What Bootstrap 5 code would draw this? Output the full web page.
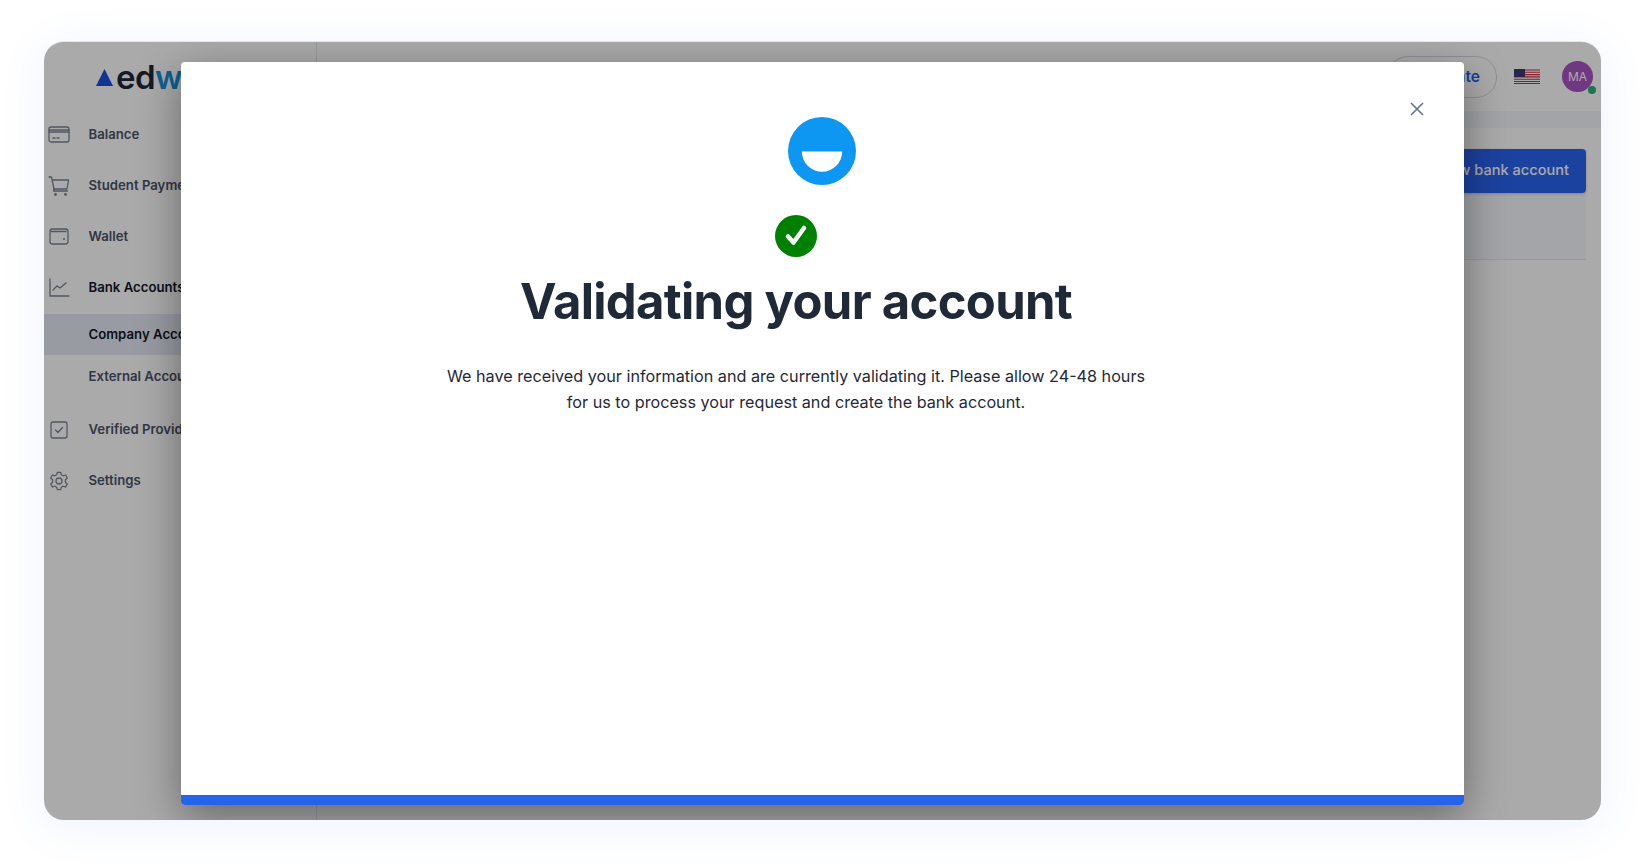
<!DOCTYPE html>
<html lang="en">
<head>
    <meta charset="UTF-8">
    <meta name="viewport" content="width=device-width, initial-scale=1.0">
    <title>Validating your account</title>
    <link href="https://cdn.jsdelivr.net/npm/bootstrap@5.3.0/dist/css/bootstrap.min.css" rel="stylesheet">
    <style>
        html, body { height: 100%; }
        body { background: #fff; font-family: Inter, "Liberation Sans", sans-serif; overflow: hidden; }
        .page-wrap { height: 867px; padding: 41px 44px 47px; }
        .app-window { height: 779px; border-radius: 20px; background: #fff; overflow: hidden; box-shadow: 0 6px 44px rgba(70, 130, 255, .1); border-top: 1px solid #dfe7f4; }
        .side-col { width: 273px; flex: none; border-right: 1px solid #e5e7eb; }
        .logo-row { height: 67px; padding: 3px 0 0 52px; gap: 3px; }
        .logo-word { font-size: 33px; font-weight: 600; line-height: 40px; color: #1f2937; letter-spacing: -.5px; }
        .logo-word span { color: #1391dc; }
        .side-item { height: 51px; color: #4a5568; font-size: 13.200px; font-weight: 600; padding-left: 3px; gap: 17.500px; white-space: nowrap; }
        .side-item svg { width: 24px; height: 24px; flex: none; fill: none; stroke: #7b8494; stroke-width: 1.300; stroke-linecap: round; stroke-linejoin: round; }
        .side-item.is-open { color: #111827; }
        .side-sub { color: #4a5568; font-size: 13.200px; font-weight: 600; padding-left: 44.500px; white-space: nowrap; }
        .side-sub.is-active { height: 41px; background: #e5ebf3; color: #111827; margin-top: 1px; }
        .side-sub.is-next { height: 43px; margin-bottom: 6px; }
        .top-row { height: 69px; padding-right: 8px; gap: 17px; }
        .pill-link { width: 110px; height: 42px; border: 1px solid #d3d9e4; border-radius: 21px; color: #2563eb; font-size: 15.500px; font-weight: 600; padding-right: 16px; }
        .flag-box { width: 26px; height: 15px; margin: 0 5px 0 0; }
        .avatar-box { width: 31px; height: 31px; background: #a855c0; color: #fff; font-size: 12px; }
        .avatar-dot { position: absolute; right: -3px; bottom: -2px; width: 8px; height: 8px; background: #22b573; }
        .info-band { height: 17px; background: #f3f6fb; }
        .main-body { padding: 21px 15px 0 0; }
        .add-btn { width: 250px; height: 44px; background: #2a63f0; color: #fff; font-size: 14.600px; font-weight: 500; border: 0; border-radius: 4px; box-shadow: 0 1px 3px rgba(0, 0, 0, .2); padding: 0 17px 0 0; text-align: right; }
        .table-strip { height: 67px; background: #f5f8fc; border-bottom: 1px solid #e5e7eb; }
        .dim-layer { position: absolute; inset: 0; background: rgba(0, 0, 0, .335); }
        .dialog-box { position: absolute; left: 137px; top: 20px; width: 1283px; height: 743px; border: 0; border-radius: 4px; box-shadow: 0 12px 44px rgba(0, 0, 0, .4); overflow: hidden; }
        .close-btn { position: absolute; right: 39px; top: 39px; padding: 0; width: 16px; height: 16px; border: 0; line-height: 0; }
        .close-btn svg { width: 16px; height: 16px; stroke: #64748b; stroke-width: 1.600; fill: none; }
        .brand-mark { width: 68px; height: 68px; margin: 55px auto 0; display: block; position: relative; left: -.5px; }
        .dialog-copy { padding: 30px 53px 0 0; text-align: center; }
        .check-mark { width: 42px; height: 42px; display: block; margin: 0 auto; }
        .dialog-title { font-size: 49px; font-weight: 700; color: #1f2937; line-height: 60px; margin: 15px 0 32px; letter-spacing: -.7px; }
        .dialog-text { font-size: 16.200px; line-height: 25.500px; color: #1f2937; margin: 0; }
        .dialog-bar { height: 10px; border-radius: 0; background: #2563eb; margin-top: auto; }
    </style>
</head>
<body>
<div class="page-wrap">
    <div class="app-window position-relative d-flex">
        <!-- Sidebar -->
        <div class="side-col">
            <div class="logo-row d-flex align-items-center">
                <svg width="17" height="17" viewBox="0 0 17 17"><polygon points="8.500,0 17,17 0,17" fill="#1d4ed8"/></svg>
                <div class="logo-word">ed<span>wa</span></div>
            </div>
            <div>
                <div class="side-item d-flex align-items-center">
                    <svg viewBox="0 0 24 24"><rect x="2" y="4" width="20" height="15" rx="2"/><path d="M2 9h20M2 7h20M6 15h2M10 15h2"/></svg>
                    Balance
                </div>
                <div class="side-item d-flex align-items-center">
                    <svg viewBox="0 0 24 24"><path d="M2 3h2.500l2.500 12h13l1.500-9H5.500"/><path d="M7 15l-.5 2h14"/><circle cx="8.500" cy="20.500" r=".8"/><circle cx="18.500" cy="20.500" r=".8"/></svg>
                    Student Payments
                </div>
                <div class="side-item d-flex align-items-center">
                    <svg viewBox="0 0 24 24"><path d="M4 6.500h15"/><rect x="3" y="4" width="18" height="15" rx="2.500"/><circle cx="17" cy="14" r=".4"/></svg>
                    Wallet
                </div>
                <div class="side-item is-open d-flex align-items-center">
                    <svg viewBox="0 0 24 24"><path d="M3 3v17h19"/><path d="M6 14l4-4 3 2 6-5"/></svg>
                    Bank Accounts
                </div>
                <div class="side-sub is-active d-flex align-items-center">Company Accounts</div>
                <div class="side-sub is-next d-flex align-items-center">External Accounts</div>
                <div class="side-item d-flex align-items-center">
                    <svg viewBox="0 0 24 24"><rect x="4" y="4" width="16" height="16" rx="2"/><path d="M8.500 12l2.500 2.500 4.500-5"/></svg>
                    Verified Providers
                </div>
                <div class="side-item d-flex align-items-center">
                    <svg viewBox="0 0 24 24"><circle cx="12" cy="12" r="3"/><path d="M10.300 3.300h3.400l.6 2.500 1.800 1 2.500-.8 1.700 3-1.900 1.700v2.600l1.900 1.700-1.700 3-2.500-.8-1.800 1-.6 2.500h-3.400l-.6-2.500-1.800-1-2.500.8-1.700-3 1.900-1.700v-2.600L3.700 9l1.700-3 2.500.8 1.800-1z"/></svg>
                    Settings
                </div>
            </div>
        </div>

        <!-- Main -->
        <div class="flex-grow-1 d-flex flex-column">
            <div class="top-row d-flex align-items-center justify-content-end">
                <div class="pill-link d-flex align-items-center justify-content-end">Update</div>
                <svg class="flag-box" viewBox="0 0 26 15">
                    <rect width="26" height="15" fill="#fff"/>
                    <path d="M0 1h26M0 3.300h26M0 5.600h26M0 7.900h26M0 10.200h26M0 12.500h26M0 14.500h26" stroke="#c8313e" stroke-width="1.100"/>
                    <rect width="11" height="8" fill="#3c3b6e"/>
                </svg>
                <div class="avatar-box position-relative rounded-circle d-flex align-items-center justify-content-center">
                    MA
                    <span class="avatar-dot rounded-circle"></span>
                </div>
            </div>
            <div class="info-band"></div>
            <div class="main-body">
                <div class="d-flex justify-content-end">
                    <button class="btn add-btn" type="button">Add new bank account</button>
                </div>
                <div class="table-strip"></div>
            </div>
        </div>

        <div class="dim-layer"></div>

        <!-- Dialog -->
        <div class="card dialog-box d-flex flex-column">
            <button class="btn close-btn" type="button" aria-label="Close">
                <svg viewBox="0 0 16 16"><path d="M2 2l12 12M14 2L2 14"/></svg>
            </button>
            <svg class="brand-mark" viewBox="0 0 69 69">
                <circle cx="34.500" cy="34.500" r="34.500" fill="#0d96f2"/>
                <path d="M14 35h41a20.500 20.500 0 0 1-41 0z" fill="#fff"/>
            </svg>
            <div class="dialog-copy">
                <svg class="check-mark" viewBox="0 0 42 42">
                    <circle cx="21" cy="21" r="21" fill="#008000"/>
                    <path d="M13 21.500l5.500 6 10.500-14.500" fill="none" stroke="#fff" stroke-width="4.500" stroke-linecap="round" stroke-linejoin="round"/>
                </svg>
                <h1 class="dialog-title">Validating your account</h1>
                <p class="dialog-text">We have received your information and are currently validating it. Please allow 24-48 hours<br>for us to process your request and create the bank account.</p>
            </div>
            <div class="progress dialog-bar"></div>
        </div>
    </div>
</div>

<script src="https://cdn.jsdelivr.net/npm/bootstrap@5.3.0/dist/js/bootstrap.bundle.min.js"></script>
</body>
</html>
